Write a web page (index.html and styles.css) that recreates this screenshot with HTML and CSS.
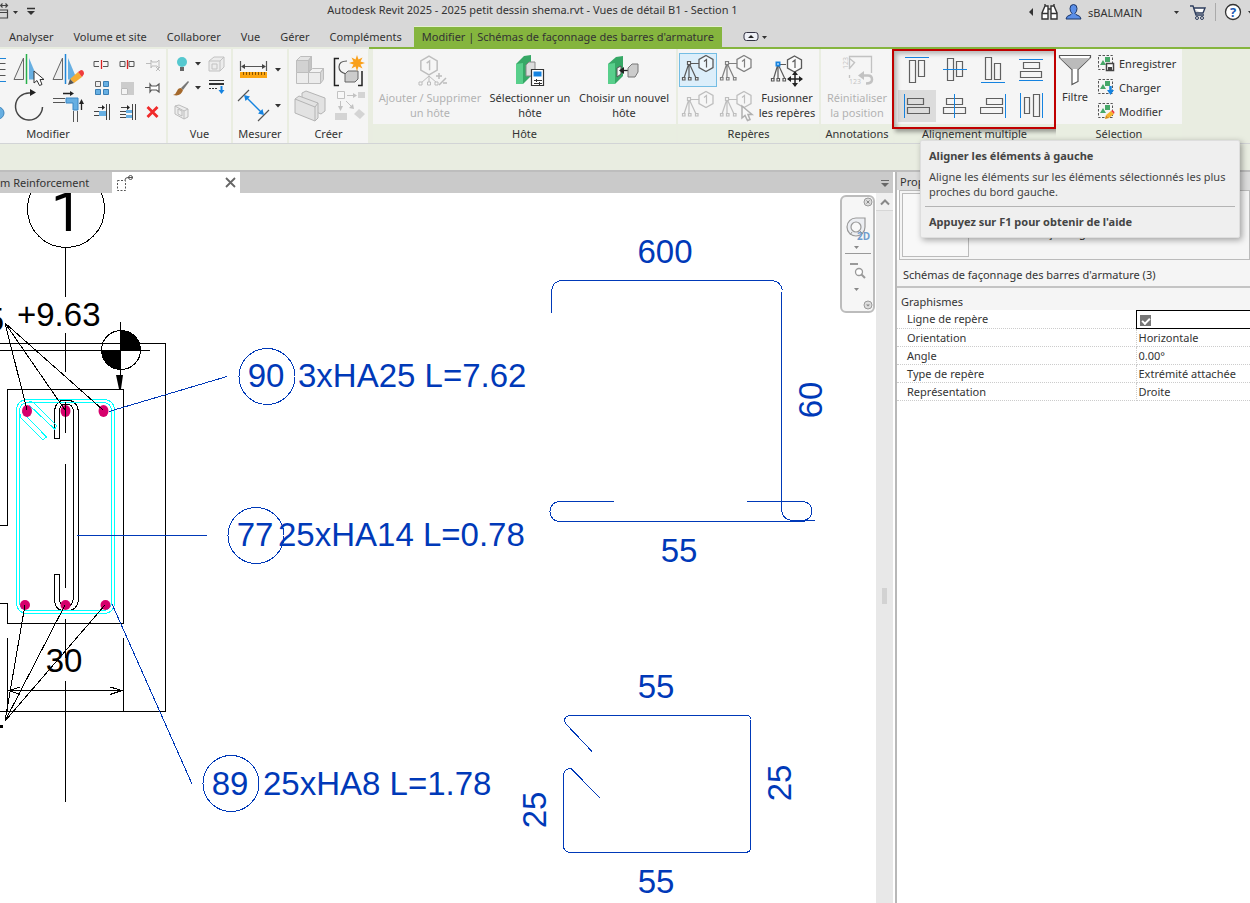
FILE: index.html
```html
<!DOCTYPE html>
<html lang="fr">
<head>
<meta charset="utf-8">
<title>Autodesk Revit 2025</title>
<link rel="stylesheet" href="styles.css">
</head>
<body>
<svg class="defs" aria-hidden="true">
  <symbol id="hex" viewBox="0 0 16 18"><path d="M8 1l7 4v8l-7 4-7-4V5z" fill="#fff" fill-opacity=".5" stroke="#5a5a5a" stroke-width="1.3"/><path d="M6 7l2.500-2v8" fill="none" stroke="#5a5a5a" stroke-width="1.2"/></symbol>
  <symbol id="tag" viewBox="0 0 38 34">
    <g fill="none" stroke="#5a5a5a" stroke-width="1.2"><path d="M10 10.500h10M10 10l-5 15M10 10v15M10 10l7 15"/><path d="M8.500 8.500h3v3h-3zM3.500 24.500h2.500v2.500h-2.500zM9.500 24.500h2.500v2.500h-2.500zM16.500 24.500h2.500v2.500h-2.500z" fill="#f5f5f5"/></g>
    <use href="#hex" x="19" y="1.500" width="16" height="18"/>
  </symbol>
  <symbol id="caret" viewBox="0 0 6 4"><path d="M0 0h6L3 3.500z" fill="#333"/></symbol>
  <symbol id="selbox" viewBox="0 0 18 18"><path d="M1.500 1.500h14v14h-14z" fill="none" stroke="#555" stroke-dasharray="2.500 1.500"/><path d="M3 11l3-5 3 5zM8 3h5v5H8z" fill="#46a869"/></symbol>
</svg>

<header class="titlebar">
  <div class="quick">
    <svg width="40" height="24"><path d="M0 10h7.500v8H0M0 12.500h7M1 5.500h6M2.500 3.500l-2 2 2 2M5.500 3.500l2 2-2 2" fill="none" stroke="#444" stroke-width="1.200"/><path d="M13 11h5l-2.500 3z" fill="#333"/><path d="M27 8.500h8" stroke="#333" stroke-width="1.500"/><path d="M27 11h8l-4 4z" fill="#333"/></svg>
  </div>
  <h1 class="app-title">Autodesk Revit 2025 - 2025 petit dessin shema.rvt - Vues de détail B1 - Section 1</h1>
  <div class="account">
    <svg width="58" height="24"><path d="M8 8v8l-4-4z" fill="#333"/><path d="M17 19v-6l3-7h3v13zM26 6h3l3 7v6h-6zM23 9h3M17.500 13.500h5M26.500 13.500h5M20 6v-2M29 6v-2" fill="#fff" stroke="#333" stroke-width="1.400"/><path d="M41 19q0-3 5-4.500l1-1q-2-2-2-5 0-4 3.500-4t3.500 4q0 3-2 5l1 1q5 1.500 5 4.500z" fill="#5b8fe8" stroke="#1b3668"/></svg>
    <button class="user">sBALMAIN</button>
    <svg width="80" height="24"><path d="M4 11h5l-2.500 3z" fill="#333"/><path d="M20 6h3l3 9h8M24 8h11l-2 5h-8" fill="#fff" stroke="#2c3c5c" stroke-width="1.400"/><circle cx="27" cy="18" r="1.500" fill="none" stroke="#2c3c5c"/><circle cx="32" cy="18" r="1.500" fill="none" stroke="#2c3c5c"/><path d="M45.500 3v18" stroke="#aaa"/><circle cx="63" cy="12" r="7.500" fill="#fff" stroke="#333" stroke-width="1.300"/><text x="63" y="17" class="help" text-anchor="middle">?</text><path d="M78 11h5l-2.500 3z" fill="#333"/></svg>
  </div>
</header>

<nav class="tabs">
  <a href="#">Analyser</a><a href="#">Volume et site</a><a href="#">Collaborer</a><a href="#">Vue</a><a href="#">Gérer</a><a href="#">Compléments</a><a href="#" class="on">Modifier | Schémas de façonnage des barres d'armature</a>
  <button class="ico collapse" aria-label="Réduire"><svg width="26" height="12"><rect x="1" y="1.500" width="14" height="8" rx="2.500" fill="#eef0f6" stroke="#334"/><path d="M5 7h6L8 4z" fill="#222"/><path d="M19 5h5l-2.500 3z" fill="#333"/></svg></button>
</nav>

<section class="ribbon">
  <div class="general">
    <div class="panel p-modify">
      <div class="body cols-modify">
        <div class="big2">
          <button class="ico" aria-label="Aligner"><svg width="8" height="34"><path d="M0 5.500h6M0 28.500h6" stroke="#1f86d8"/><path d="M0 10.500h5.500M0 16.500h5.500M0 22.500h5.500" stroke="#555"/></svg></button>
          <button class="ico" aria-label="Copier"><svg width="8" height="34"><circle cx="-2" cy="24" r="6" fill="#67afe2" stroke="#3f86bd"/></svg></button>
        </div>
        <div class="big2">
          <button class="ico" aria-label="Symétrie - Choisir l'axe"><svg width="36" height="34"><path d="M4 26.500L13.500 5v21.500z" fill="#eee" stroke="#666"/><path d="M16.500 1v30" stroke="#27b04b" stroke-width="1.500"/><path d="M19 26.500V5l9 21.500z" fill="#67afe2"/><path d="M24 18v12l3-2.500 2.500 5 2.500-1-2-5h4z" fill="#fff" stroke="#333"/></svg></button>
          <button class="ico" aria-label="Rotation"><svg width="36" height="34"><path d="M20 4a13.500 13.500 0 1 0 12.500 14" fill="none" stroke="#444" stroke-width="1.500"/><path d="M20 0v7l6-3.500z" fill="#222"/></svg></button>
        </div>
        <div class="big2">
          <button class="ico" aria-label="Symétrie - Dessiner l'axe"><svg width="36" height="34"><path d="M3 26.500L12.500 5v21.500z" fill="#eee" stroke="#666"/><path d="M15.500 1v30" stroke="#1f86d8" stroke-width="1.500"/><path d="M18 26.500V5l9 21.500z" fill="#67afe2"/><path d="M20 26l8-7 4 5-8 6z" fill="#f5ad33"/><path d="M28 19l3-2q3 0 3 4l-2 3z" fill="#ef3b3b"/><path d="M20 26l4 4-6 2z" fill="#555"/></svg></button>
          <button class="ico" aria-label="Ajuster"><svg width="36" height="34"><path d="M3 9.500h12M3 13.500h12M23.500 22v11M27.500 22v11" stroke="#555"/><path d="M16 9h12v12h-5v-7h-7z" fill="#67afe2" stroke="#3a86c4"/><path d="M13 4.500h9M31.500 21v-7" stroke="#222" stroke-width="1.300"/><path d="M20 2v5l4-2.500zM29 15h5l-2.500-5z" fill="#222"/></svg></button>
        </div>
        <div class="small6">
          <button class="ico" aria-label="Scinder"><svg width="18" height="18"><path d="M7 6.500H2v5h5M11 6.500h5v5h-5" fill="none" stroke="#555"/><path d="M9.500 5v9" stroke="#d22" stroke-width="1.300"/></svg></button>
          <button class="ico" aria-label="Scinder avec espace"><svg width="18" height="18"><path d="M2 6.500h5v5H2zM11 6.500h5v5h-5z" fill="none" stroke="#555"/><path d="M9.500 5v9" stroke="#d22" stroke-width="1.300"/></svg></button>
          <button class="ico off" aria-label="Déverrouiller"><svg width="18" height="18"><path d="M2 8.500h5M7 5l1 2h5l2-2v8l-2-2H8l-1 2zM12 12l4 4M16 12l-4 4" fill="none" stroke="#555"/></svg></button>
          <button class="ico" aria-label="Réseau"><svg width="18" height="18"><path d="M3.500 2.500h5v5h-5z" fill="#eee" stroke="#666"/><path d="M11.500 2.500h5v5h-5zM3.500 10.500h5v5h-5zM11.500 10.500h5v5h-5z" fill="#67afe2" stroke="#3a7fb5"/></svg></button>
          <button class="ico" aria-label="Échelle"><svg width="18" height="18"><path d="M3 3h13v13h-6V9H3z" fill="#ccc"/><path d="M3.500 9.500h6v6h-6z" fill="#f4f4f4" stroke="#bbb"/></svg></button>
          <button class="ico" aria-label="Verrouiller"><svg width="18" height="18"><path d="M1 8.500h5M6 5l1.500 2h5L15 5v8l-2.500-2h-5L6 13z" fill="#fff" stroke="#555" stroke-width="1.200"/></svg></button>
          <button class="ico" aria-label="Prolonger"><svg width="18" height="18"><path d="M2 8.500h5M2 12.500h5M6 4.500h6M14.500 1v16M17.500 1v16" stroke="#444"/><path d="M7 8h7v5H7z" fill="#67afe2"/><path d="M10 2v5l3-2.500z" fill="#222"/></svg></button>
          <button class="ico" aria-label="Prolonger plusieurs"><svg width="18" height="18"><path d="M2 8.500h6M2 11.500h6M2 14.500h6M3 4.500h8M14.500 1v16M17.500 1v16" stroke="#444"/><path d="M8 7h6v3H8zM8 12h6v3H8z" fill="#67afe2"/><path d="M9 2v5l3-2.500z" fill="#222"/></svg></button>
          <button class="ico" aria-label="Supprimer"><svg width="18" height="18"><path d="M3.500 4l10 10M13.500 4l-10 10" stroke="#f02a2a" stroke-width="2.800"/></svg></button>
        </div>
      </div>
      <h2>Modifier</h2>
    </div>
    <div class="panel p-view">
      <div class="body cols-view">
        <button class="ico" aria-label="Révéler"><svg width="18" height="18"><circle cx="10" cy="7" r="5" fill="#55c8cf"/><path d="M8 12h4v4H8z" fill="#666"/></svg></button>
        <svg width="6" height="4"><use href="#caret"/></svg>
        <button class="ico off" aria-label="Boîte"><svg width="18" height="18"><path d="M2 6l5-4h10v10l-4 4H2zM5 9h5v5H5zM13 6l4-4M13 6v10M2 6h11" fill="#ddd" stroke="#666"/></svg></button>
        <button class="ico" aria-label="Remplacer"><svg width="18" height="18"><path d="M16 2L9 9l2 2 6-8z" fill="#777"/><path d="M9 9q-3 0-4 3t-4 4q8 2 10-5z" fill="#a5692c"/></svg></button>
        <svg width="6" height="4"><use href="#caret"/></svg>
        <button class="ico" aria-label="Lignes"><svg width="18" height="18"><path d="M2 1.500h15" stroke="#333"/><path d="M2 5h15" stroke="#333" stroke-width="2"/><path d="M2 9.500h9" stroke="#333" stroke-dasharray="2 1"/><path d="M14.500 7v6" stroke="#1583e0" stroke-width="2"/><path d="M11.500 11h6l-3 4z" fill="#1583e0"/></svg></button>
        <button class="ico off" aria-label="Volume"><svg width="18" height="18"><path d="M3 3l4-1 9 4v8l-4 2-9-5zM3 3l9 5v8M12 8l4-2M6 6v5l4 2V8z" fill="#ddd" stroke="#555"/></svg></button>
      </div>
      <h2>Vue</h2>
    </div>
    <div class="panel p-measure">
      <div class="body cols-measure">
        <button class="ico" aria-label="Mesurer"><svg width="34" height="34"><path d="M4.500 8v10M30.500 8v10M6 13.500h23" stroke="#555" stroke-width="1.200"/><path d="M5 13.500l4-2.500v5zM30 13.500l-4-2.500v5z" fill="#444"/><path d="M4 19h27v6H4z" fill="#fca510"/><path d="M7.500 19v3M10.500 19v3M13.500 19v3M16.500 19v3M19.500 19v3M22.500 19v3M25.500 19v3M28.500 19v3" stroke="#875300"/></svg></button>
        <svg width="6" height="4"><use href="#caret"/></svg>
        <button class="ico" aria-label="Cote alignée"><svg width="34" height="34"><path d="M2 12L13 1M22 32l11-11" stroke="#555" stroke-width="1.200"/><path d="M10 8l16 16" stroke="#1583e0" stroke-width="1.400"/><path d="M8 6l6 1.500-4.500 4.500zM28 26l-1.500-6-4.500 4.500z" fill="#1583e0"/></svg></button>
        <svg width="6" height="4"><use href="#caret"/></svg>
      </div>
      <h2>Mesurer</h2>
    </div>
    <div class="panel p-create">
      <div class="body cols-create">
        <button class="ico" aria-label="Assemblage"><svg width="34" height="34"><g stroke="#bdbdbd"><path d="M2.500 7.500l4-4h11l-3 4z" fill="#e4e4e4"/><path d="M14.500 7.500l3-4v12l-3 3z" fill="#c4c4c4"/><path d="M2.500 7.500h12v12h-12z" fill="#d2d2d2"/><path d="M2.500 19.500h12v11h-12z" fill="#ececec"/><path d="M14.500 19.500l4-4h11l-3 4z" fill="#f2f2f2"/><path d="M26.500 19.500l3-4v11l-3 4z" fill="#d8d8d8"/><path d="M14.500 19.500h12v11h-12z" fill="#ececec"/></g></svg></button>
        <button class="ico" aria-label="Créer un groupe"><svg width="34" height="34"><path d="M7 5.500H2.500v27H7M26 32.500h4V18" fill="none" stroke="#222" stroke-width="1.500"/><path d="M14 21q-7-2-7-7 0-6 8-6" fill="none" stroke="#555" stroke-width="1.200"/><path d="M13 21l3-3h10v8l-3 3H13z" fill="#ccc" stroke="#666"/><path d="M25 2l1.500 4.500 4-2-2 4 4.500 1.500-4.500 1.500 2 4-4-2L25 18l-1.500-4.500-4 2 2-4L17 10l4.500-1.500-2-4 4 2z" fill="#f9a01b"/></svg></button>
        <button class="ico" aria-label="Pièces"><svg width="34" height="34"><g fill="#e2e2e2" stroke="#b4b4b4"><path d="M8 4l4-2 19 7v13l-4 3-19-8z"/><path d="M1 10l4-3 19 7v15l-3 3-20-8z"/><path d="M1 10l20 8v14M21 18l3-4" fill="none"/></g></svg></button>
        <button class="ico off" aria-label="Similaire"><svg width="34" height="34"><path d="M5.500 2.500h7v7h-7z" fill="#fff" stroke="#666"/><path d="M26 3h7v6h-7zM3 24h12v7H3zM22 25l5-5 6 5-5 5z" fill="#999"/><path d="M15 6.500h8M8.500 12v7M14 12l6 6" stroke="#666"/><path d="M21 4v5l4-2.500zM6 17h5l-2.500 5zM21 15l1 5-5-1z" fill="#666"/></svg></button>
      </div>
      <h2>Créer</h2>
    </div>
  </div>
  <div class="context">
    <div class="panel p-host">
      <div class="body">
        <button class="big off w-add" disabled><svg width="34" height="36"><use href="#hex" x="6" y="3" width="20" height="21"/><path d="M16 24L8 31M16 24v7M16 24l8 7" stroke="#555" fill="none"/><path d="M6 30h3v3H6zM14.500 30h3v3h-3zM22 30h3v3h-3z" fill="#fff" stroke="#555"/><path d="M23 24h6M26 21v6M26 33l7-7M30 31h4" stroke="#555" stroke-width="1.500"/></svg><span>Ajouter / Supprimer<br>un hôte</span></button>
        <button class="big w-sel"><svg width="34" height="36"><path d="M3 12l8-8 7-1v21l-8 8H3z" fill="#36a866"/><path d="M3 12l7-1v21H3z" fill="#58cf8b"/><path d="M13 13l3-3h6v11l-4 3h-5z" fill="#ddd" stroke="#888"/><path d="M18.500 17.500h12v16h-12z" fill="#fff" stroke="#333" stroke-width="1.200"/><path d="M20.500 19.500h8v5h-8z" fill="#1583e0"/><path d="M21 28.500h8M21 31.500h8M23.500 27v3M26.500 30v3" stroke="#333"/></svg><span>Sélectionner un<br>hôte</span></button>
        <button class="big w-pick"><svg width="34" height="36"><path d="M1 12l8-7 7-1v20l-8 8H1z" fill="#36a866"/><path d="M1 12l7-1v21H1z" fill="#58cf8b"/><path d="M10 16l4-2v8l-4 3z" fill="#f5f5f5" stroke="#555"/><path d="M14 18.500h8" stroke="#222" stroke-width="1.300"/><path d="M17 15v7l-5-3.500z" fill="#222"/><path d="M21 16l4-4h6v8l-3 5h-7z" fill="#ccc" stroke="#777"/></svg><span>Choisir un nouvel<br>hôte</span></button>
      </div>
      <h2>Hôte</h2>
    </div>
    <div class="panel p-tags">
      <div class="body">
        <div class="tag-grid">
          <button class="ico sel" aria-label="Repère 1"><svg width="38" height="34"><use href="#tag"/></svg></button>
          <button class="ico soft" aria-label="Repère 2"><svg width="38" height="34"><use href="#tag"/></svg></button>
          <button class="ico off" aria-label="Repère 3"><svg width="38" height="34"><use href="#tag"/></svg></button>
          <button class="ico off" aria-label="Repère 4"><svg width="38" height="34"><use href="#tag"/><path d="M25 17v12l3-2.500 2.500 5 2.500-1-2-5h4z" fill="#fff" stroke="#333" stroke-width="1.500"/></svg></button>
        </div>
        <button class="big w-merge"><svg width="34" height="36"><g fill="none" stroke="#5a5a5a" stroke-width="1.200"><path d="M8 12.500h8M8 12L3.500 27M8 12v15M8 12l7 15"/><path d="M1.500 26.500H4V29H1.500zM7 26.500h2.500V29H7zM13 26.500h2.500V29H13z" fill="#fff"/></g><path d="M5.500 9.500h5v5h-5z" fill="#1583e0"/><path d="M7 12h2" stroke="#fff"/><use href="#hex" x="16" y="3" width="17" height="18"/><path d="M25 20v14M18 27h14" stroke="#222" stroke-width="1.500"/><path d="M22 23h6l-3-4zM22 31h6l-3 4zM21 24v6l-4-3zM29 24v6l4-3z" fill="#222"/></svg><span>Fusionner<br>les repères</span></button>
      </div>
      <h2>Repères</h2>
    </div>
    <div class="panel p-notes">
      <div class="body">
        <button class="big off w-reset" disabled><svg width="34" height="36"><path d="M9.500 17V4.500h22V21M9.500 23v3M9 17L15 10M9 6l6 5" fill="none" stroke="#666" stroke-width="1.300"/><path d="M20 23.500h8q4 0 4 4t-6 4" fill="none" stroke="#666" stroke-width="2.500"/><path d="M24 19v9l-6-4.500z" fill="#666"/><text x="9" y="32" class="n123">123</text><text x="-17" y="8" transform="rotate(-90)" class="n123">123</text></svg><span>Réinitialiser<br>la position</span></button>
      </div>
      <h2>Annotations</h2>
    </div>
    <div class="panel p-align">
      <div class="body align-grid">
        <button class="ico" aria-label="Aligner en haut"><svg width="26" height="28" viewBox="0 1 26 28"><path d="M1 2.500h24" stroke="#1583e0"/><path d="M5.500 5.500h6v22h-6zM14.500 5.500h6v16h-6z" class="o"/></svg></button>
        <button class="ico" aria-label="Aligner au milieu"><svg width="26" height="28" viewBox="0 1 26 28"><path d="M5.500 3.500h6v22h-6zM14.500 6.500h6v15h-6z" class="o"/><path d="M1 14.500h24" stroke="#1583e0"/></svg></button>
        <button class="ico" aria-label="Aligner en bas"><svg width="26" height="28" viewBox="0 1 26 28"><path d="M1 27.500h24" stroke="#1583e0"/><path d="M5.500 2.500h6v22h-6zM14.500 8.500h6v16h-6z" class="o"/></svg></button>
        <button class="ico" aria-label="Répartir verticalement"><svg width="26" height="28" viewBox="0 1 26 28"><path d="M1 4.500h24M1 25.500h24" stroke="#1583e0"/><path d="M5.500 7.500h16v6h-16zM2.500 16.500h21v6h-21z" class="o"/></svg></button>
        <button class="ico hot" aria-label="Aligner les éléments à gauche"><svg width="26" height="28"><path d="M.5 2v24" stroke="#1583e0"/><path d="M3.500 6.500h16v6h-16zM3.500 15.500h22v6h-22z" class="o"/></svg></button>
        <button class="ico" aria-label="Centrer"><svg width="26" height="28"><path d="M4.500 6.500h16v6h-16zM1.500 15.500h22v6h-22z" class="o"/><path d="M12.500 2v24" stroke="#1583e0"/></svg></button>
        <button class="ico" aria-label="Aligner à droite"><svg width="26" height="28"><path d="M25.500 2v24" stroke="#1583e0"/><path d="M6.500 6.500h16v6h-16zM.5 15.500h22v6h-22z" class="o"/></svg></button>
        <button class="ico" aria-label="Répartir horizontalement"><svg width="26" height="28"><path d="M2.500 1v25M24.500 1v25" stroke="#1583e0"/><path d="M6.500 5.500h5v16h-5zM15.500 2.500h6v22h-6z" class="o"/></svg></button>
      </div>
      <h2>Alignement multiple</h2>
      <div class="red-box"></div>
    </div>
    <div class="panel p-select">
      <div class="body">
        <button class="big w-filter"><svg width="34" height="36"><path d="M1.500 4.500h31v2L20 18.500v12l-6 3v-15L1.500 6.500z" fill="#fff" stroke="#555" stroke-width="1.200"/><path d="M2 7h30L20 18h-6z" fill="#bbb"/></svg><span>Filtre</span></button>
        <div class="rows">
          <button><svg width="18" height="18"><use href="#selbox"/><path d="M9.500 9.500h7v7h-7z" fill="#fff" stroke="#444" stroke-width="1.500"/><path d="M11 13h4v3h-4z" fill="#444"/></svg>Enregistrer</button>
          <button><svg width="18" height="18"><use href="#selbox"/><path d="M13.500 8v6" stroke="#1583e0" stroke-width="2.500"/><path d="M10 12h7l-3.500 5z" fill="#1583e0"/></svg>Charger</button>
          <button><svg width="18" height="18"><use href="#selbox"/><path d="M9 13l5-4 3 3-5 4z" fill="#f7b52c"/><path d="M14 9l1.500-1 2 2-.5 2z" fill="#ef3b3b"/><path d="M9 13l3 3-4 1z" fill="#d98b10"/></svg>Modifier</button>
        </div>
      </div>
      <h2>Sélection</h2>
    </div>
  </div>
</section>
<div class="options"></div>

<main class="work">
  <section class="view">
    <div class="doc-tabs">
      <a href="#" class="doc">m Reinforcement</a>
      <div class="doc on"><svg width="20" height="18"><path d="M1.500 6.500h8v10h-8z" fill="none" stroke="#555" stroke-dasharray="2 1.500"/><path d="M9 6q0-2.500 3-2.500" fill="none" stroke="#555"/><circle cx="14.500" cy="3.500" r="2" fill="none" stroke="#555"/><path d="M12 3.500h5" stroke="#555"/></svg><button class="ico" aria-label="Fermer"><svg width="11" height="11"><path d="M1 1l9 9M10 1l-9 9" stroke="#666" stroke-width="1.800"/></svg></button></div>
      <button class="ico more" aria-label="Liste des vues"><svg width="10" height="8"><path d="M1 1.500h8" stroke="#666"/><path d="M1 4h8L5 8z" fill="#666"/></svg></button>
    </div>
    <div class="canvas-row">
      <div class="canvas">
        <svg class="drawing">
          <g transform="translate(0 -193)">
            <g class="k">
              <circle cx="66" cy="209" r="38.500"/>
              <path d="M65.500 248v49M65.500 333v39M65.500 402v31M65.500 464v124M65.500 619v39M65.500 681v121"/>
              <path d="M0 343.500h165.500v368H0M0 350.500h150"/>
              <path d="M0 525.500h7.500v-136h116v234H7.500v-20H0"/>
              <circle cx="121" cy="350" r="19.500"/>
              <path d="M120.500 322v68"/>
              <path d="M7.500 638v74M123.500 638v74M8 690.500h115M20 687l-11 3.500 11 4M110 687l12 3.500-12 4"/>
              <path d="M54.500 438.500V411q1-11 11.500-11t12.500 11v188q-1 12-12.500 12T54.500 599v-24.500h5V600q1 7 6.500 7t7.500-8V411q-1-7-7.500-7t-6.500 7v27.500z"/>
            </g>
            <path d="M121 350v-19.500A19.500 19.500 0 0 1 140.500 350zM121 350v19.500A19.500 19.500 0 0 1 101.500 350zM116 375h7l-2 14h-2z"/>
            <g class="cy">
              <rect x="16.500" y="399.500" width="98" height="214" rx="10"/>
              <rect x="19.500" y="402.500" width="92" height="208" rx="8"/>
              <path d="M27 403q4-3 8 1l22 22-2.500 3L29 405M20 414l1 4 22 22 3.500-3-24-25"/>
            </g>
            <g class="dots"><ellipse cx="27" cy="411" rx="5" ry="6"/><ellipse cx="65.500" cy="411" rx="5" ry="6"/><ellipse cx="103.500" cy="411" rx="5" ry="6"/><circle cx="25" cy="605" r="5"/><circle cx="65.500" cy="605" r="5"/><circle cx="105.500" cy="605" r="5"/></g>
            <g class="k"><path d="M5 323l22 87M5 323l60 87M5 323l98 87M5 721l20-116M5 721l60-116M5 721l100-116"/><path d="M0 726.500h3" class="thick"/><path d="M65.500 402v31"/></g>
            <g class="note"><text x="51" y="231" class="axis">1</text><text x="17" y="326">+9.63</text><text x="4" y="331" text-anchor="end">5</text><text x="64" y="672" text-anchor="middle">30</text></g>
            <g class="b">
              <path d="M109 411.500L227 376.500M77 535.500h130M112 604l80 180"/>
              <circle cx="267" cy="376.500" r="28"/><circle cx="256" cy="535.500" r="28"/><circle cx="231" cy="783.500" r="28"/>
              <path d="M551.500 313v-22q1-10 10.500-10.500h210q9 1 10.500 10M781.500 292v218q1 10 11 10.500h22"/>
              <path d="M614 501.500h-55a9 10 0 0 0 0 20h246M747 501.500h56a9 9.500 0 0 1 0 19"/>
              <path d="M592 751.500L566 724q-4-6 3-8.500h178q3 0 4 3M750.500 720v129q-1 3-4 3.500H569q-4-1-5.500-5v-73q2-7 8-5.500l29 29.500"/>
            </g>
            <g class="note blue">
              <text x="266" y="387" text-anchor="middle">90</text><text x="298" y="387">3xHA25 L=7.62</text>
              <text x="255" y="546" text-anchor="middle">77</text><text x="278" y="546">25xHA14 L=0.78</text>
              <text x="230" y="795" text-anchor="middle">89</text><text x="263" y="795">25xHA8 L=1.78</text>
              <text x="665" y="263" text-anchor="middle">600</text><text x="679" y="562" text-anchor="middle">55</text>
              <text x="656" y="698" text-anchor="middle">55</text><text x="656" y="893" text-anchor="middle">55</text>
              <text transform="translate(822 400) rotate(-90)" text-anchor="middle">60</text>
              <text transform="translate(791 783) rotate(-90)" text-anchor="middle">25</text>
              <text transform="translate(546 810) rotate(-90)" text-anchor="middle">25</text>
            </g>
          </g>
        </svg>
        <div class="navbar">
          <svg width="32" height="114"><circle cx="26" cy="5" r="4" fill="#ddd" stroke="#999"/><path d="M24.500 3.500l3 3M27.500 3.500l-3 3" stroke="#888"/><path d="M14 21h9v9a9 9 0 1 1-9-9z" fill="#eceef2" stroke="#999" stroke-width="1.200"/><circle cx="14" cy="30" r="5" fill="#f8f8f8" stroke="#999" stroke-width="1.200"/><path d="M10 35l-2 3M18 34l3 3" stroke="#999"/><text x="15" y="43" class="t2d">2D</text><path d="M12 49h5l-2.500 3z" fill="#888"/><path d="M3 56.500h26" stroke="#999"/><path d="M8 67h8" stroke="#999" stroke-width="2"/><circle cx="17" cy="75" r="3.500" fill="#fff" stroke="#999" stroke-width="1.300"/><path d="M19 77l4 4" stroke="#999" stroke-width="2"/><path d="M12 91h5l-2.500 3z" fill="#888"/><circle cx="26" cy="108" r="4" fill="#ddd" stroke="#999"/><path d="M24 107.500h4l-2 2z" fill="#888"/></svg>
        </div>
      </div>
      <div class="vscroll"><button class="ico up" aria-label="Défiler vers le haut"><svg width="10" height="8"><path d="M1 6.500l4-4 4 4" fill="none" stroke="#888" stroke-width="2"/></svg></button><div class="thumb"></div></div>
    </div>
  </section>
  <aside class="props">
    <div class="props-title">Propriétés</div>
    <div class="type"><div class="preview"></div><div class="type-name">Schéma de façonnage</div></div>
    <div class="filter-row">Schémas de façonnage des barres d'armature (3)</div>
    <h3>Graphismes</h3>
    <table>
      <tr><th><label for="ldr">Ligne de repère</label></th><td class="edit"><input type="checkbox" id="ldr" checked></td></tr>
      <tr><th>Orientation</th><td>Horizontale</td></tr>
      <tr><th>Angle</th><td>0.00°</td></tr>
      <tr><th>Type de repère</th><td>Extrémité attachée</td></tr>
      <tr><th>Représentation</th><td>Droite</td></tr>
    </table>
  </aside>
</main>

<div class="tooltip" role="tooltip">
  <strong>Aligner les éléments à gauche</strong>
  <p>Aligne les éléments sur les éléments sélectionnés les plus proches du bord gauche.</p>
  <strong class="f1">Appuyez sur F1 pour obtenir de l'aide</strong>
</div>
</body>
</html>
```
FILE: styles.css
```css
* { box-sizing: border-box; }
body {
  margin: 0;
  min-height: 100vh;
  display: flex;
  flex-direction: column;
  position: relative;
  overflow: hidden;
  background: #d8d8d8;
  color: #333;
  font: 11px/15px "Noto Sans", "Open Sans", sans-serif;
}
h1, h2, h3, p { margin: 0; font: inherit; }
a { color: inherit; text-decoration: none; }
button { margin: 0; padding: 0; border: 0; background: none; color: inherit; font: inherit; }
svg { display: block; flex: none; }
.defs { position: absolute; width: 0; height: 0; }
.ico { display: flex; align-items: center; justify-content: center; }
.off { opacity: .35; }
.soft { opacity: .75; }

/* title bar */
.titlebar { display: flex; height: 24px; }
.quick { width: 40px; }
.app-title { flex: 1; text-align: center; line-height: 20px; white-space: nowrap; }
.account { display: flex; align-items: center; width: 225px; }
.user { width: 87px; text-align: left; padding-left: 5px; }
.help { font: bold 13px "Open Sans", sans-serif; fill: #1c5bb5; }

.tabs { display: flex; height: 25px; align-items: stretch; line-height: 20px; padding-top: 3px; white-space: nowrap; }
.tabs a { padding: 0 10px; height: 20px; }
.tabs a:first-child { padding-left: 9px; }
.tabs .on { margin-left: 2px; padding: 0 8px; background: #85b53e; box-shadow: 0 -1px #e4f0d0; }
.collapse { margin-left: 21px; height: 20px; }

/* ribbon */
.ribbon { display: flex; height: 97px; margin-top: -2px; background: #e9ede1; border-bottom: 1px solid #d2d4d6; }
.general { display: flex; gap: 2px; padding-top: 2px; padding-right: 1px; }
.context { display: flex; flex: 1; gap: 2px; padding-left: 4px; border-top: 2px solid #85b53e; }
.panel { display: flex; flex-direction: column; position: relative; background: #f5f5f5; }
.context .panel { background: linear-gradient(#f5f5f5 75px, #e9eee1 75px); }
.panel .body { display: flex; height: 75px; padding-top: 3px; }
.panel h2 { text-align: center; line-height: 19px; color: #333; white-space: nowrap; }
.p-modify { width: 166px; }
.p-modify h2 { padding-right: 70px; }
.p-view { width: 63px; }
.p-measure { width: 54px; }
.p-create { width: 79px; }
.big2 { display: grid; grid-template-rows: 36px 36px; width: 40px; }
.big2:first-child { width: 8px; }
.small6 { display: grid; grid-template-columns: repeat(3, 26px); grid-template-rows: repeat(3, 24px); }
.panel .cols-view { display: grid; grid-template-columns: 26px 8px 28px; grid-template-rows: repeat(3, 24px); align-items: center; justify-items: center; }
.panel .cols-measure { display: grid; grid-template-columns: 40px 10px; grid-template-rows: 36px 36px; align-items: center; justify-items: center; }
.panel .cols-create { display: grid; grid-template-columns: 38px 38px; grid-template-rows: 36px 36px; padding-left: 3px; }
.big { display: flex; flex-direction: column; align-items: center; gap: 2px; white-space: nowrap; }
.big span { text-align: center; }
.p-host { width: 303px; }
.w-add { width: 114px; }
.w-sel { width: 86px; }
.w-pick { width: 102px; }
.p-tags { width: 141px; }
.tag-grid { display: grid; grid-template-columns: 38px 38px; grid-template-rows: 36px 36px; align-items: center; }
.tag-grid { margin-left: 1px; }
.sel { background: #dceefa; outline: 1px solid #74bde4; outline-offset: -1px; }
.w-merge { width: 64px; }
.p-notes { width: 72px; }
.w-reset { width: 72px; }
.n123 { font: 7px "Open Sans", sans-serif; fill: #666; }
.p-align { width: 159px; }
.panel .align-grid { display: grid; grid-template-columns: repeat(4, 38px); grid-template-rows: 36px 36px; padding-left: 3px; }
.hot { background: #dcdcdc; margin: 2px 0; }
.o { fill: none; stroke: #606060; stroke-width: 1.2; }
.red-box { position: absolute; inset: 0 -2px 14px -3px; border: 2px solid #c00000; box-shadow: 3px 3px 4px rgba(0, 0, 0, .35), inset 3px 3px 4px rgba(0, 0, 0, .25); pointer-events: none; }
.p-select { width: 126px; }
.w-filter { width: 38px; }
.panel.p-select .body { padding-top: 2px; }
.rows { display: grid; grid-template-rows: repeat(3, 24px); padding-left: 3px; }
.rows button { display: flex; align-items: center; gap: 4px; white-space: nowrap; }

.options { height: 28px; background: #e9ede1; border-bottom: 2px solid #bdbdbd; }

/* work area */
.work { display: flex; flex: 1; }
.view { display: flex; flex-direction: column; flex: 1; min-width: 0; background: #fff; }
.doc-tabs { display: flex; height: 21px; background: #cacaca; }
.doc { width: 112px; line-height: 22px; white-space: nowrap; }
.doc.on { display: flex; align-items: center; justify-content: space-between; width: 128px; padding: 0 4px; background: #fff; }
.more { margin-left: auto; padding-right: 3px; }
.canvas-row { display: flex; flex: 1; }
.canvas { position: relative; flex: 1; overflow: hidden; background: #fff; }
.drawing { position: absolute; inset: 0; width: 100%; height: 100%; }
.k, .b, .cy { fill: none; shape-rendering: crispEdges; }
.k { stroke: #000; }
.k .thick { stroke-width: 3; }
.b { stroke: #0039b8; }
.cy { stroke: #00ffff; }
.dots { fill: #d6006c; }
.note { font: 33px "Liberation Sans", Arial, sans-serif; fill: #000; }
.note.blue { fill: #0039b8; }
.note .axis { font: 56px Roboto, sans-serif; }
.navbar { position: absolute; top: 2px; right: 1px; width: 35px; border: 2px solid #bcbcbc; border-radius: 6px; background: #f6f6f6; }
.t2d { font: bold 10px "Open Sans", sans-serif; fill: #6f9ccc; }
.vscroll { width: 17px; background: #e8e8e8; }
.up { width: 17px; height: 18px; background: #f0f0f0; border-bottom: 1px solid #d6d6d6; }
.thumb { width: 5px; height: 16px; margin: 377px 0 0 6px; background: #d2d2d2; }

/* properties */
.props { width: 357px; padding-left: 2px; border-left: 2px solid #fff; background: linear-gradient(90deg, #b8b8b8 2px, #fff 2px); white-space: nowrap; overflow: hidden; }
.props-title { height: 18px; padding-left: 3px; line-height: 20px; background: #dcdcdc; }
.type { display: flex; height: 70px; margin-left: 2px; padding: 2px; border: 1px solid #bbb; background: #f5f5f5; }
.preview { width: 67px; border: 1px solid #bbb; background: #f8f8f8; }
.type-name { padding: 32px 0 0 9px; }
.filter-row { height: 28px; padding-left: 6px; line-height: 29px; background: #f5f5f5; border-bottom: 2px solid #c4c4c4; }
h3 { height: 22px; padding-left: 4px; line-height: 27px; background: #f5f5f5; }
table { width: 100%; border-collapse: collapse; table-layout: fixed; background: #fff; }
th, td { height: 18px; padding: 0; font-weight: 400; text-align: left; border-bottom: 1px dotted #ccc; }
th { width: 239px; padding-left: 10px; border-right: 1px dotted #ccc; }
td { padding-left: 2px; }
th, td { line-height: 14px; }
td.edit { border: 1px solid #000; border-right: 0; padding-left: 3px; }
.edit input { display: block; appearance: none; width: 11px; height: 11px; margin: 2px 0 0; background: #777; }
.edit input:checked::after { content: ""; display: block; width: 6px; height: 3px; margin: 3px 2px; border: solid #fff; border-width: 0 0 2px 2px; rotate: -45deg; }

.tooltip { position: absolute; top: 140px; right: 10px; width: 320px; padding: 7px 8px 8px; border: 1px solid #dedede; border-radius: 2px; background: #efefef; box-shadow: 2px 2px 6px rgba(0, 0, 0, .35); color: #444; }
.tooltip strong { display: block; font-weight: 700; }
.tooltip p { padding: 6px 0 7px; }
.tooltip .f1 { margin: 0 -4px; padding: 7px 4px 0; border-top: 1px solid #b4b4b4; }
```
